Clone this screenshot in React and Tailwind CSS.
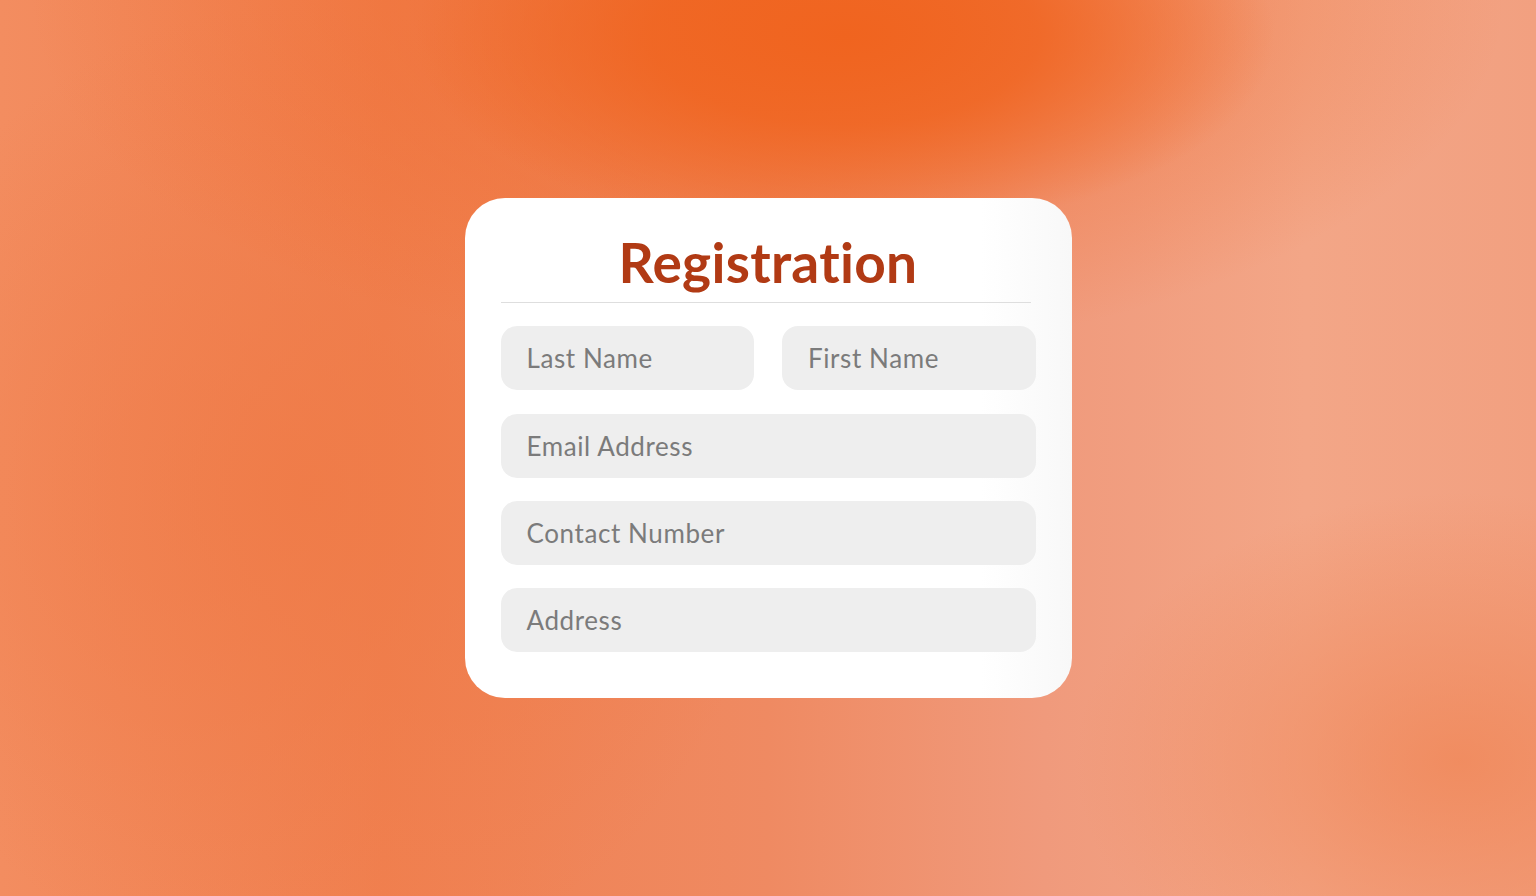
export default function App() {
  const field =
    "h-[64px] rounded-[16px] bg-[#eeeeee] flex items-center pl-[26px] text-[26px] tracking-[0.6px] text-[#7b7b7b]";
  return (
    <div
      className="w-full h-[896px] flex items-center justify-center overflow-hidden bg-[radial-gradient(ellipse_28%_22%_at_55%_4%,#f0641f_0%,rgba(240,100,31,0.8)_45%,rgba(240,100,31,0)_100%),radial-gradient(ellipse_48%_40%_at_50%_0%,rgba(240,105,40,0.75)_0%,rgba(240,105,40,0.35)_55%,rgba(240,105,40,0)_100%),radial-gradient(ellipse_30%_55%_at_20%_55%,rgba(239,122,70,0.8)_0%,rgba(239,122,70,0)_100%),radial-gradient(ellipse_25%_30%_at_95%_85%,rgba(240,135,88,0.8)_0%,rgba(240,135,88,0)_100%),linear-gradient(90deg,#f38d60_0%,#f08050_25%,#ef8a62_50%,#f09a7c_68%,#f3a687_85%,#f2a080_100%)]"
      style={{ fontFamily: "Lato, 'Open Sans', sans-serif" }}
    >
      <div className="w-[607px] h-[500px] rounded-[40px] bg-[linear-gradient(90deg,#ffffff_0%,#ffffff_85%,#f8f8f8_100%)] px-[36px] pt-[33px] flex flex-col">
        <h1 className="text-center text-[55px] leading-[62px] font-bold text-[#b13a14] tracking-[0.3px]">
          Registration
        </h1>
        <div className="h-px bg-[#dedede] mt-[9px] mr-[5px]" />
        <div className="mt-[23px] grid grid-cols-2 gap-x-[28px]">
          <div className={field}>Last Name</div>
          <div className={field}>First Name</div>
        </div>
        <div className={field + " mt-[24px]"}>Email Address</div>
        <div className={field + " mt-[23px]"}>Contact Number</div>
        <div className={field + " mt-[23px]"}>Address</div>
      </div>
    </div>
  );
}
